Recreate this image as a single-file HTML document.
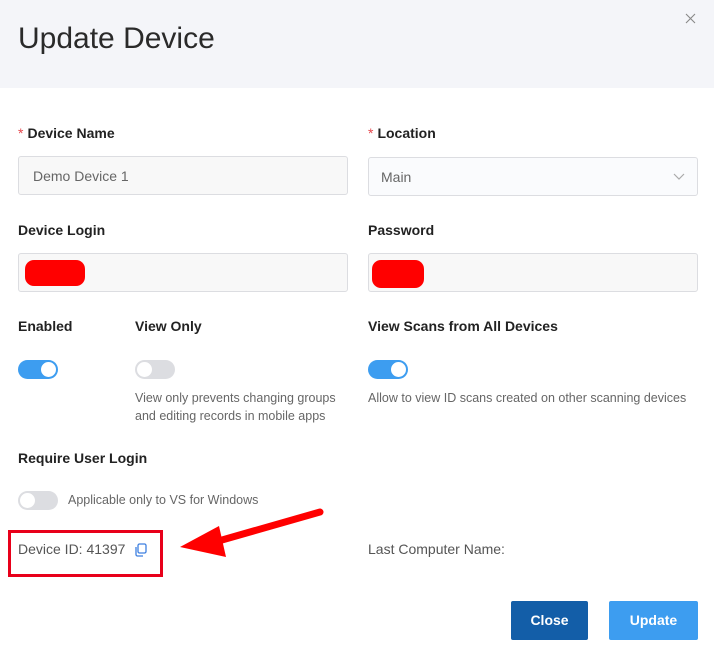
<!DOCTYPE html>
<html><head><style>
*{box-sizing:border-box;margin:0;padding:0}
body{width:714px;height:655px;background:#fff;font-family:"Liberation Sans",sans-serif;color:#222;position:relative;overflow:hidden}
.hdr{position:absolute;left:0;top:0;width:714px;height:88px;background:#f4f5f9}
.t{position:absolute;left:18px;top:22px;font-size:30px;color:#2a2a2a}
.a{position:absolute;white-space:nowrap}
.lbl{font-size:14px;font-weight:bold;color:#222}
.req{color:#e5484d;font-weight:normal;margin-right:4px}
.inp{position:absolute;height:39px;border:1px solid #dcdde1;border-radius:3px;background:#f8f8f8;font-size:14px;color:#666;padding:11px 14px}
.tg{position:absolute;width:40px;height:19px;border-radius:10px;background:#dcdde1}
.tg::after{content:"";position:absolute;top:2px;left:2px;width:15px;height:15px;border-radius:50%;background:#fff}
.tg.on{background:#3d9df0}.tg.on::after{left:23px}
.help{font-size:12.5px;color:#666;line-height:18px}
.red{position:absolute;background:#f00;border-radius:9px;height:26px}
.btn{position:absolute;height:39px;color:#fff;font-weight:bold;font-size:14px;text-align:center;line-height:39px;border-radius:2px}
</style></head><body>
<div class="hdr"></div>
<div class="t">Update Device</div>
<svg style="position:absolute;left:685px;top:13px" width="11" height="11" viewBox="0 0 11 11"><path d="M1 1l9 9M10 1l-9 9" stroke="#888" stroke-width="1.1"/></svg>
<div class="a lbl" style="left:18px;top:125px"><span class="req">*</span>Device Name</div>
<div class="a lbl" style="left:368px;top:125px"><span class="req">*</span>Location</div>
<div class="inp" style="left:18px;top:156px;width:330px">Demo Device 1</div>
<div class="inp" style="left:368px;top:157px;width:330px;background:#fafbfd;padding-left:12px">Main
<svg style="position:absolute;right:12px;top:15px" width="12" height="8" viewBox="0 0 12 8"><path d="M1 1l5 5 5-5" fill="none" stroke="#aaa" stroke-width="1.2"/></svg></div>
<div class="a lbl" style="left:18px;top:222px">Device Login</div>
<div class="a lbl" style="left:368px;top:222px">Password</div>
<div class="inp" style="left:18px;top:253px;width:330px"></div>
<div class="inp" style="left:368px;top:253px;width:330px"></div>
<div class="red" style="left:25px;top:260px;width:60px"></div>
<div class="red" style="left:372px;top:260px;width:52px;height:28px"></div>
<div class="a lbl" style="left:18px;top:318px">Enabled</div>
<div class="a lbl" style="left:135px;top:318px">View Only</div>
<div class="a lbl" style="left:368px;top:318px">View Scans from All Devices</div>
<div class="tg on" style="left:18px;top:360px"></div>
<div class="tg" style="left:135px;top:360px"></div>
<div class="tg on" style="left:368px;top:360px"></div>
<div class="a help" style="left:135px;top:389px">View only prevents changing groups<br>and editing records in mobile apps</div>
<div class="a help" style="left:368px;top:389px">Allow to view ID scans created on other scanning devices</div>
<div class="a lbl" style="left:18px;top:450px">Require User Login</div>
<div class="tg" style="left:18px;top:491px"></div>
<div class="a help" style="left:68px;top:491px">Applicable only to VS for Windows</div>
<div class="a" style="left:18px;top:541px;font-size:14px;color:#555">Device ID: 41397</div>
<svg style="position:absolute;left:134px;top:543px" width="13" height="14" viewBox="0 0 13 14"><rect x="4" y="1" width="8" height="9" rx="1.5" fill="none" stroke="#3d7fe0" stroke-width="1.3"/><path d="M2 4v7.5a1.5 1.5 0 0 0 1.5 1.5H9" fill="none" stroke="#3d7fe0" stroke-width="1.3"/></svg>
<div style="position:absolute;left:8px;top:530px;width:155px;height:47px;border:3px solid #e8001a"></div>
<svg style="position:absolute;left:0;top:0" width="714" height="655"><path d="M320 512L222 540" stroke="#f00" stroke-width="7" stroke-linecap="round"/><path d="M180 547L219 526L226 557Z" fill="#f00"/></svg>
<div class="a" style="left:368px;top:541px;font-size:14px;color:#555">Last Computer Name:</div>
<div class="btn" style="left:511px;top:601px;width:77px;background:#135ea8">Close</div>
<div class="btn" style="left:609px;top:601px;width:89px;background:#3d9df0">Update</div>
</body></html>
